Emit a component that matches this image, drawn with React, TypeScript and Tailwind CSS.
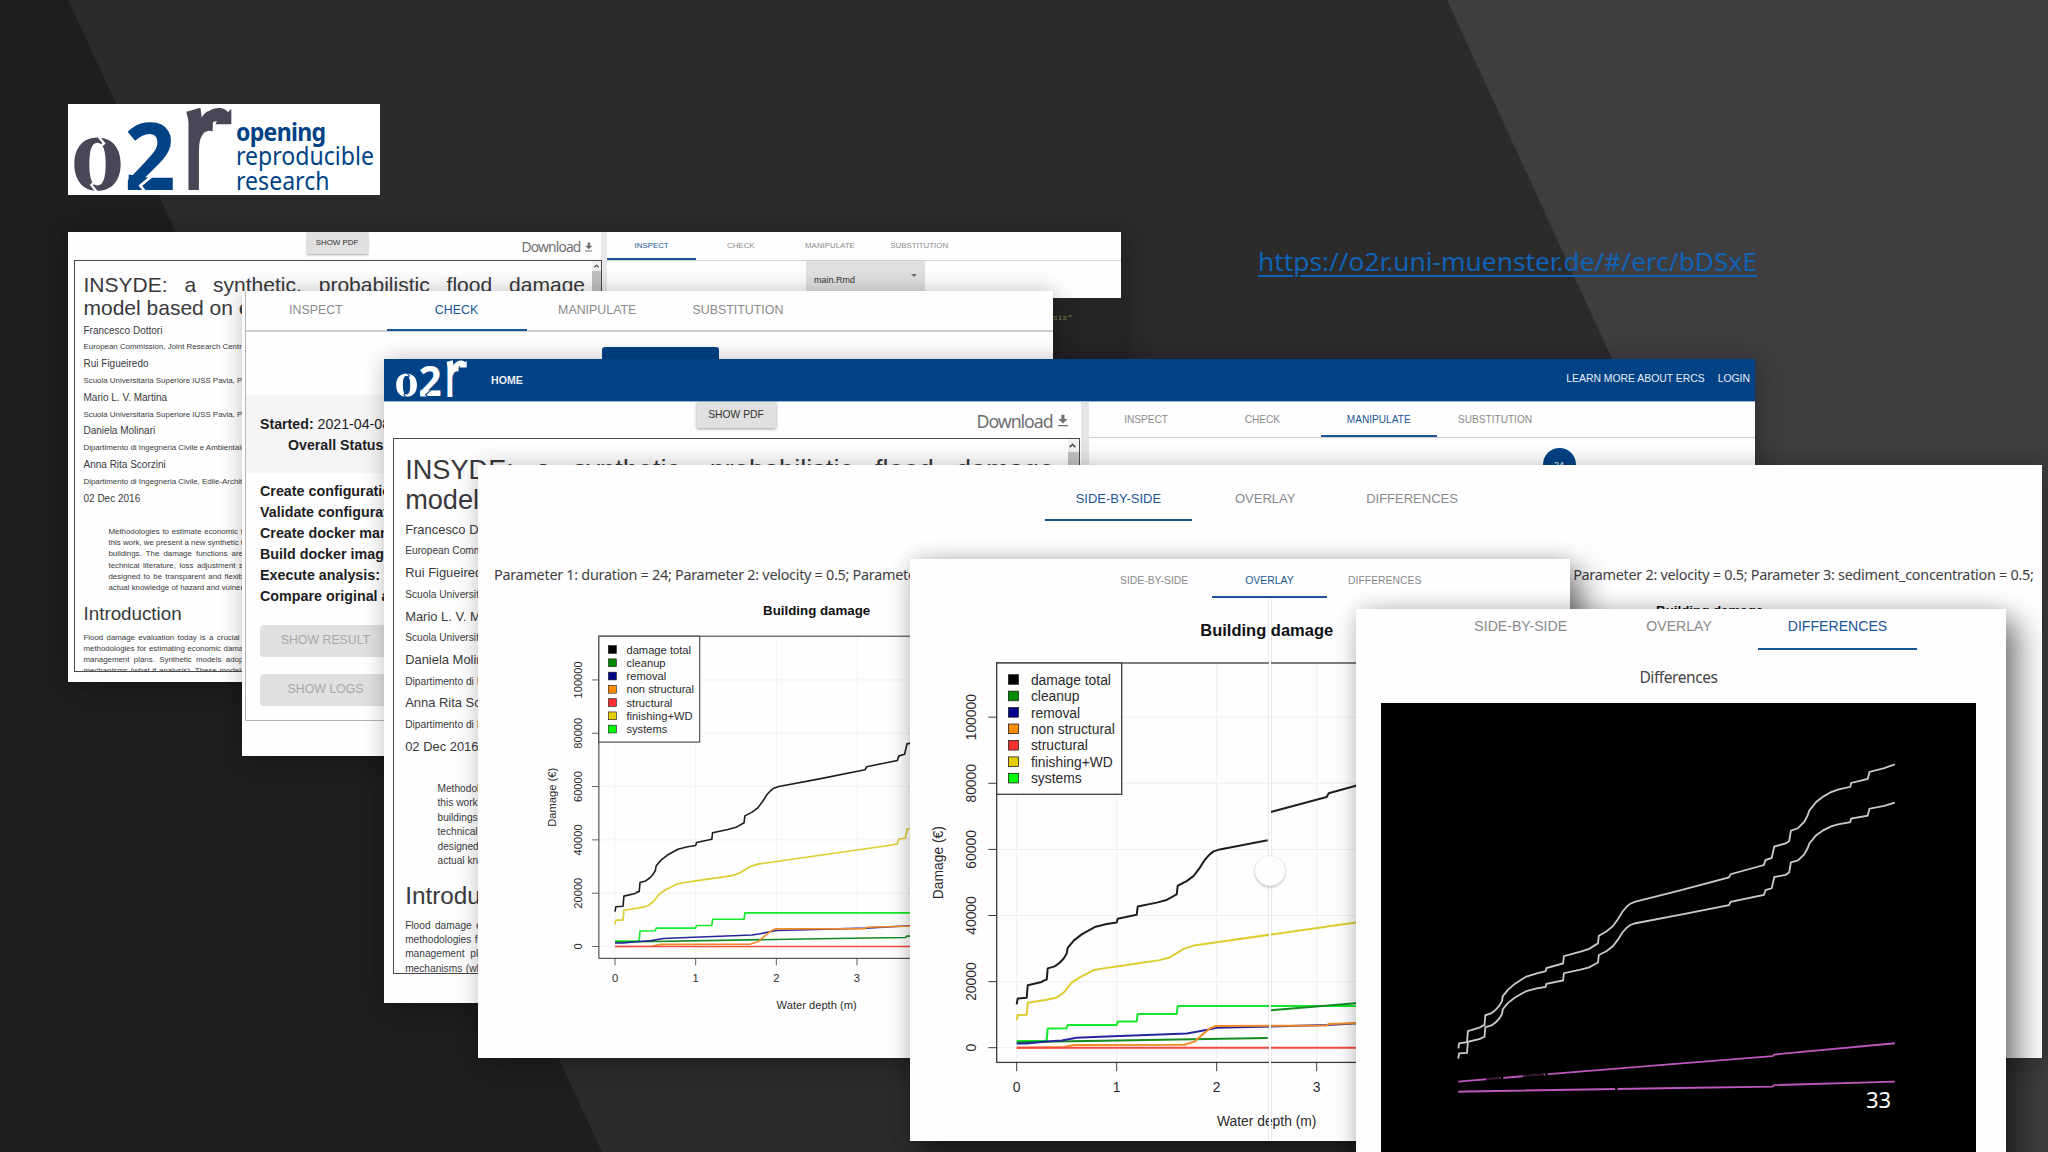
import { clsx } from "clsx";
import type { ReactNode } from "react";

type Point = [number, number];

// water depth (m) -> damage (thousand euro)
const total: Point[] = [
  [0, 13.1], [0.01, 14.9], [0.1, 15.1], [0.11, 18.9], [0.25, 19.9], [0.27, 20.3], [0.3, 20.6], [0.31, 24],
  [0.38, 24.6], [0.43, 25.7], [0.47, 27], [0.5, 28.5], [0.51, 30.2], [0.57, 32.4], [0.65, 34.3], [0.78, 36.5],
  [0.9, 37.4], [1, 37.9], [1.01, 39], [1.2, 40.2], [1.21, 42.7], [1.4, 43.9], [1.5, 44.7], [1.6, 46.4],
  [1.61, 49], [1.7, 50.4], [1.77, 52], [1.83, 54.4], [1.88, 56.8], [1.93, 58.5], [1.97, 59.4], [2.03, 60],
  [2.52, 62.8], [3.1, 66.3], [3.12, 67.4], [3.5, 69.8], [3.52, 71.5], [3.59, 72.1], [3.62, 76], [3.75, 76.8],
  [3.79, 77.6], [3.81, 81.1], [3.89, 81.8], [3.96, 83.8], [4, 85.9], [4.02, 87.6], [4.1, 90.5], [4.18, 92.2],
  [4.27, 93.6], [4.35, 94.3], [4.49, 95], [4.5, 96.3], [4.69, 97.3], [4.71, 99.7], [4.88, 100.7], [5, 101.8],
];

const finishing: Point[] = [
  [0, 8.3], [0.01, 9.9], [0.1, 10], [0.11, 13.6], [0.3, 14.5], [0.4, 15.2], [0.47, 16.7], [0.55, 19.7],
  [0.63, 21.3], [0.77, 23.5], [0.87, 24], [1, 24.6], [1.43, 26.5], [1.53, 27.3], [1.67, 29.9], [1.77, 30.9],
  [2, 31.9], [3.39, 37.9], [3.5, 38.5], [3.52, 40.3], [3.6, 40.6], [3.62, 44], [3.8, 45],
];

const systems: Point[] = [
  [0, 2], [0.27, 2], [0.3, 2.3], [0.31, 5.8], [0.5, 5.9], [0.51, 6.9], [1, 6.9], [1.01, 7.9], [1.2, 7.9],
  [1.21, 10.2], [1.6, 10.2], [1.61, 12.6], [5, 12.6],
];

const removal: Point[] = [
  [0, 1.3], [0.1, 1.3], [0.3, 1.9], [0.45, 2.2], [0.6, 3], [0.9, 3.4], [1.7, 4.3], [1.8, 4.8], [2, 6],
  [3.1, 6.9], [3.6, 7.7], [5, 8.5],
];

const nonStructural: Point[] = [
  [0, 0], [0.45, 0.1], [0.57, 0.8], [1.68, 0.9], [1.78, 1.9], [1.85, 3.8], [1.93, 5.8], [1.99, 6.6], [3.1, 6.7],
  [3.12, 7.2], [3.6, 7.6], [5, 7.8],
];

const cleanup: Point[] = [[0, 1.6], [0.1, 1.7], [2.52, 2.9], [3.6, 3.4], [3.62, 3.9], [5, 5.1]];

const raise = (points: Point[]): Point[] => points.map(([x, y]) => [x, y + 3.5 + 1.96 * x]);
const from = (points: Point[], start: Point): Point[] => [start, ...points.filter(([x]) => x > start[0])];
const until = (points: Point[], end: Point): Point[] => [...points.filter(([x]) => x < end[0]), end];

const toPolyline = (points: Point[]) => points.map(([x, y]) => `${x * 100},${-y * 3.305}`).join(" ");

const legend = [
  { label: "damage total", color: "#000000" },
  { label: "cleanup", color: "#008b00" },
  { label: "removal", color: "#00008b" },
  { label: "non structural", color: "#ff8c00" },
  { label: "structural", color: "#ff3030" },
  { label: "finishing+WD", color: "#e6cd00" },
  { label: "systems", color: "#00ff00" },
];

const authors = [
  ["Francesco Dottori", "European Commission, Joint Research Centre"],
  ["Rui Figueiredo", "Scuola Universitaria Superiore IUSS Pavia, Pavia"],
  ["Mario L. V. Martina", "Scuola Universitaria Superiore IUSS Pavia, Pavia"],
  ["Daniela Molinari", "Dipartimento di Ingegneria Civile e Ambientale"],
  ["Anna Rita Scorzini", "Dipartimento di Ingegneria Civile, Edile-Architettura"],
];

const steps = [
  "Create configuration file:",
  "Validate configuration file:",
  "Create docker manifest:",
  "Build docker image:",
  "Execute analysis:",
  "Compare original and",
];

function Window({ className, deep, children }: { className: string; deep?: boolean; children: ReactNode }) {
  return (
    <section
      className={clsx(
        "absolute overflow-hidden bg-[#fefefe]",
        deep
          ? "shadow-[0_0_20px_rgba(0,0,0,0.18),14px_14px_28px_rgba(0,0,0,0.45)]"
          : "shadow-[0_0_22px_rgba(0,0,0,0.2),8px_8px_24px_rgba(0,0,0,0.1)]",
        className
      )}
    >
      {children}
    </section>
  );
}

function Tabs({
  items,
  active,
  className,
  tabClassName,
}: {
  items: string[];
  active: string;
  className?: string;
  tabClassName: string;
}) {
  return (
    <nav className={clsx("flex", className)}>
      {items.map((item) => (
        <span
          key={item}
          className={clsx(
            "flex shrink-0 items-center justify-center border-b-2",
            tabClassName,
            item === active ? "border-[#1c5595] text-[#1c5595]" : "border-transparent text-[#8a8a8c]"
          )}
        >
          {item}
        </span>
      ))}
    </nav>
  );
}

const ercTabs = ["INSPECT", "CHECK", "MANIPULATE", "SUBSTITUTION"];
const compareTabs = ["SIDE-BY-SIDE", "OVERLAY", "DIFFERENCES"];

function LogoMark({ className, round, two, gap }: { className: string; round: string; two: string; gap: string }) {
  return (
    <svg viewBox="18 8 474 254" className={className} preserveAspectRatio="none">
      {/* ring with two arrow cuts */}
      <path
        fill={round}
        fillRule="evenodd"
        d="M88 100 C134 100 158 134 158 180 C158 227 134 261 88 261 C43 261 19 227 19 180 C19 134 43 100 88 100 Z M88 116 C70 116 64 143 64 180 C64 218 70 245 88 245 C107 245 113 218 113 180 C113 143 107 116 88 116 Z"
      />
      <path d="M92 98 L108 118 L84 138" fill="none" stroke={gap} strokeWidth="7" />
      <path d="M86 264 L70 244 L92 222" fill="none" stroke={gap} strokeWidth="7" />
      <text transform="translate(169 258) scale(0.95 1)" fontFamily="Open Sans" fontWeight="700" fontSize="284" fill={two}>
        2
      </text>
      <path d="M182 212 L182 259 L226 259 L212 248 L240 222 Z" fill={two} />
      <path d="M250 218 L217 246 L230 262" fill="none" stroke={gap} strokeWidth="8" />
      <text transform="translate(345 260) scale(0.49 1)" fontFamily="Open Sans" fontWeight="700" fontSize="430" fill={round}>
        r
      </text>
      <path
        d="M355 22 L397 10 L402 45 C415 22 432 11 452 11 C465 11 477 17 480 24 L490 13 V60 H442 L447 50 C430 52 412 68 402 92 L364 60 Z"
        fill={round}
      />
    </svg>
  );
}

function Download({ className }: { className: string }) {
  return (
    <span className={clsx("flex items-center text-[#6f6f72]", className)}>
      <span className="font-['Noto_Sans'] tracking-[-0.06em]">Download</span>
      <svg viewBox="0 0 14 17" className="ml-[0.3em] h-[0.76em] w-[0.56em]" fill="currentColor">
        <path d="M4.8 0 H9.2 V6 H13.5 L7 12.3 L0.5 6 H4.8 Z M0 14.3 H14 V16.4 H0 Z" />
      </svg>
    </span>
  );
}

// everything in em, so the same paper works at both window scales
function Paper({ className }: { className: string }) {
  return (
    <div
      className={clsx(
        "relative overflow-hidden border border-[#4a4a4e] pt-[1.2em] pl-[0.9em] whitespace-nowrap text-[#39393c]",
        className
      )}
    >
      <div className="w-[50.15em]">
        <h1 className="text-[2.1em] leading-[1.115]">
          <div className="[text-align-last:justify]">INSYDE: a synthetic, probabilistic flood damage</div>
          <div>model based on explicit cost analysis</div>
        </h1>
        <div className="mt-[0.27em]">
          {authors.map(([name, place]) => (
            <div key={name}>
              <p className="leading-[1.68]">{name}</p>
              <p className="text-[0.79em] leading-[2.127]">{place}</p>
            </div>
          ))}
          <p className="leading-[1.68]">02 Dec 2016</p>
        </div>
        <div className="mt-[1.88em] pl-[2.5em]">
          <div className="text-[0.787em] leading-[1.417]">
            <p className="[word-spacing:0.08em]">Methodologies to estimate economic flood damages are</p>
            <p>this work, we present a new synthetic flood damage model</p>
            <p className="[word-spacing:0.25em]">buildings. The damage functions are designed using</p>
            <p className="[word-spacing:0.18em]">technical literature, loss adjustment studies, and damage</p>
            <p className="[word-spacing:0.13em]">designed to be transparent and flexible, and therefore</p>
            <p>actual knowledge of hazard and vulnerability variables.</p>
          </div>
        </div>
        <h2 className="mt-[0.18em] text-[1.88em] leading-[1.88]">Introduction</h2>
        <div className="text-[0.787em] leading-[1.417]">
          <p className="[word-spacing:0.15em]">Flood damage evaluation today is a crucial component</p>
          <p className="[word-spacing:0.05em]">methodologies for estimating economic damages are</p>
          <p className="[word-spacing:0.29em]">management plans. Synthetic models adopt an</p>
          <p className="[word-spacing:0.08em]">mechanisms (what-if analysis). These models</p>
        </div>
      </div>
      <div className="absolute top-0 right-0 flex h-full w-[0.85em] flex-col items-center bg-[#f1f1f1]">
        <svg viewBox="0 0 8 8" className="h-[1em] w-[0.7em]" fill="none" stroke="#505050" strokeWidth="1.4">
          <path d="M1.5 5.5 L4 3 L6.5 5.5" />
        </svg>
        <div className="w-full flex-1 bg-[#c1c1c1]" />
      </div>
    </div>
  );
}

function Series({ points, color }: { points: Point[]; color: string }) {
  return <polyline points={toPolyline(points)} fill="none" stroke={color} strokeWidth="2" strokeLinejoin="round" />;
}

function DamageChart({ viewBox, className, split }: { viewBox: string; className: string; split?: boolean }) {
  const gray = "#3c3c3e";
  return (
    <svg viewBox={viewBox} className={className} fontFamily="Liberation Sans" fontSize="13.85" fill="#2a2a2c">
      {[0, 1, 2, 3, 4, 5].map((x) => (
        <line key={x} x1={x * 100} x2={x * 100} y1="-384" y2="14" stroke="#efeff1" />
      ))}
      {[0, 1, 2, 3, 4, 5].map((y) => (
        <line key={y} x1="-20" x2="520" y1={y * -66.1} y2={y * -66.1} stroke="#efeff1" />
      ))}
      <Series points={systems} color="#14e82c" />
      <Series points={finishing} color="#decb2e" />
      {split ? (
        <>
          <Series points={until(total, [2.51, 62.8])} color="#1e1e22" />
          <Series points={from(raise(total), [2.54, 71.3])} color="#1e1e22" />
          <Series points={until(cleanup, [2.51, 2.9])} color="#148c20" />
          <Series points={from(raise(cleanup), [2.54, 11.3])} color="#148c20" />
        </>
      ) : (
        <>
          <Series points={total} color="#1e1e22" />
          <Series points={cleanup} color="#148c20" />
        </>
      )}
      <Series points={removal} color="#26269c" />
      <Series points={nonStructural} color="#f08c28" />
      <Series points={[[0, 0], [5, 0]]} color="#f24a40" />

      <rect x="-20" y="-384.7" width="540" height="399.4" fill="none" stroke={gray} strokeWidth="1.3" />
      {[0, 1, 2, 3, 4, 5].map((x) => (
        <g key={x}>
          <line x1={x * 100} x2={x * 100} y1="14.7" y2="23.5" stroke={gray} />
          <text x={x * 100} y="44.5" textAnchor="middle">
            {x}
          </text>
        </g>
      ))}
      {[0, 20000, 40000, 60000, 80000, 100000].map((y) => (
        <g key={y}>
          <line x1="-28.4" x2="-20" y1={y * -0.003305} y2={y * -0.003305} stroke={gray} />
          <text transform={`translate(-40.5 ${y * -0.003305}) rotate(-90)`} textAnchor="middle">
            {y}
          </text>
        </g>
      ))}
      <text transform="translate(-73.7 -185) rotate(-90)" textAnchor="middle">
        Damage (€)
      </text>
      <text x="250" y="78" textAnchor="middle">
        Water depth (m)
      </text>
      <text x="250" y="-411.5" textAnchor="middle" fontWeight="700" fontSize="16.5" fill="#101012">
        Building damage
      </text>

      <rect x="-20" y="-384.7" width="125" height="131.3" fill="#fefefe" stroke={gray} strokeWidth="1.3" />
      {legend.map(({ label, color }, i) => (
        <g key={label}>
          <rect x="-8.3" y={-373 + i * 16.44} width="10" height="9.6" fill={color} stroke="#222" strokeWidth="0.8" />
          <text x="14.2" y={-363 + i * 16.44}>
            {label}
          </text>
        </g>
      ))}
    </svg>
  );
}

function DifferenceChart() {
  const lines = [
    { points: total, color: "#c9c9c9" },
    { points: raise(total), color: "#c9c9c9" },
    { points: cleanup, color: "#bd58bd" },
    { points: raise(cleanup), color: "#bd58bd" },
  ];
  return (
    <svg viewBox="-88.4 -450.6 681.3 514.9" className="h-[449.5px] w-[595px] bg-black">
      {lines.map(({ points, color }, i) => (
        <polyline key={i} points={toPolyline(points)} fill="none" stroke={color} strokeWidth="2.1" />
      ))}
      <g stroke="#000" strokeWidth="3">
        <path d="M181 -14 V0 M381 -48 V-30 M101 -32 V-18 M50 -30 V-14" />
        <path d="M32 -19 L48 -20.5 M74 -22.5 L98 -24.5" strokeOpacity="0.75" />
      </g>
    </svg>
  );
}

const parameterText =
  "Parameter 1: duration = 24; Parameter 2: velocity = 0.5; Parameter 3: sediment_concentration = 0.5;";

export default function App() {
  return (
    <main className="relative h-[1152px] w-[2048px] overflow-hidden bg-[#2b2b2c] font-['Liberation_Sans',sans-serif]">
      <svg viewBox="0 0 2048 1152" className="absolute inset-0 h-full w-full">
        <path d="M0 0 H68 L602 1152 H0 Z" fill="#1e1e1f" />
        <path d="M1447 0 H2048 V1152 H1977 Z" fill="#3e3e40" />
      </svg>

      {/* Project logo */}
      <div className="absolute top-[104px] left-[68px] flex h-[91px] w-[312px] bg-white text-[#004286]">
        <LogoMark className="mt-[3px] ml-[6px] h-[84px] w-[158px] shrink-0" round="#474757" two="#004286" gap="#ffffff" />
        <div className="ml-[3.5px] origin-left scale-x-[0.905] pt-[14.5px] font-['Noto_Sans'] text-[25.5px] leading-[24.6px]">
          <div className="font-bold tracking-[-0.03em]">opening</div>
          <div>reproducible</div>
          <div>research</div>
        </div>
      </div>

      <a className="absolute top-[242px] left-[1258px] font-['Noto_Sans'] text-[26.3px] leading-[38px] whitespace-nowrap text-[#1062b4] underline decoration-2 underline-offset-4">
        https://o2r.uni-muenster.de/#/erc/bDSxE
      </a>

      {/* Inspect */}
      <Window className="top-[232px] left-[68px] flex h-[450px] w-[1053px]">
        <div className="w-[533px] shrink-0 pl-[5.5px]">
          <div className="flex h-[28px]">
            <div className="ml-[233px] h-[22px] w-[61px] bg-[#e0e0e0] pt-[5px] text-center text-[7.9px] leading-[11px] text-[#303030] shadow-[0_1px_2px_rgba(0,0,0,0.35)]">
              SHOW PDF
            </div>
            <Download className="ml-[154px] pt-[3px] text-[13.8px]" />
          </div>
          <Paper className="h-[412px] w-[528px] text-[10px]" />
        </div>
        <div className="w-[6px] shrink-0 bg-[#e8e8ea]" />
        <div className="flex-1">
          <Tabs
            items={ercTabs}
            active="INSPECT"
            className="border-b border-[#cfcfd2] text-[7.9px]"
            tabClassName="w-[89.2px] h-[27.5px] pt-[2px]"
          />
          <div className="h-[37px]">
            <div className="ml-[199px] flex h-[31px] w-[119px] items-center justify-between bg-[#e0e0e0] px-[8px] pt-[9px] text-[9px] text-[#303033]">
              main.Rmd
              <span className="mb-[10px] border-x-[3px] border-t-[3px] border-x-transparent border-t-[#6f6f72]" />
            </div>
          </div>
          <div className="h-full bg-[#252526] pt-[14px] pl-[422px] font-['Liberation_Mono'] text-[8px] leading-[12px] text-[#7d8a4e]">
            analysis"
          </div>
        </div>
      </Window>

      {/* Check */}
      <Window className="top-[291px] left-[242px] h-[465px] w-[811px] pl-[3px]">
        <div className="h-[430px] border-b border-l border-[#b5b5b8]">
          <Tabs
            items={ercTabs}
            active="CHECK"
            className="border-b-2 border-[#d0d0d3] text-[12.4px]"
            tabClassName="-mb-px w-[140.7px] h-[40px] pr-px"
          />
          <div className="flex h-[63px] items-start">
            <div className="mt-[15px] ml-[356px] h-[40px] w-[117px] rounded-[3px] bg-[#004286]" />
          </div>
          <div className="h-[78px] bg-[#f5f5f6] pt-[19px] pl-[14px] text-[14.2px] leading-[21px] whitespace-nowrap text-[#1d1d1f]">
            <p>
              <b>Started:</b> 2021-04-08
            </p>
            <p className="pl-[28px] font-bold">Overall Status:</p>
          </div>
          <div className="pt-[7.5px] pl-[14px] text-[14.3px] leading-[21.1px] font-bold text-[#1d1d1f]">
            {steps.map((step) => (
              <p key={step}>{step}</p>
            ))}
          </div>
          <div className="mt-[17.5px] ml-[14px] flex w-[131px] flex-col gap-[17px] text-[12.3px] text-[#a9a9ab]">
            {["SHOW RESULT", "SHOW LOGS"].map((label) => (
              <div key={label} className="flex h-[32px] items-center justify-center rounded-[4px] bg-[#e0e0e0]">
                {label}
              </div>
            ))}
          </div>
        </div>
      </Window>

      {/* Manipulate */}
      <Window className="top-[359px] left-[383.5px] h-[644px] w-[1371.5px]">
        <header className="flex h-[43px] items-center border-b border-[#9db3cf] bg-[#004286] text-[10.4px] text-[#eaf0f6]">
          <LogoMark className="mt-[-3px] ml-[12px] h-[37px] w-[71px]" round="#ffffff" two="#ffffff" gap="#004286" />
          <b className="mt-px ml-[24.5px] text-[10.6px]">HOME</b>
          <span className="-mt-[3px] ml-auto">LEARN MORE ABOUT ERCS</span>
          <span className="-mt-[3px] mr-[5px] ml-[13px]">LOGIN</span>
        </header>
        <div className="flex h-full">
          <div className="w-[697px] shrink-0 pl-[9px]">
            <div className="flex h-[36px]">
              <div className="ml-[304px] h-[26px] w-[79px] bg-[#e0e0e0] pt-[6px] text-center text-[10.3px] leading-[14px] text-[#303030] shadow-[0_1px_3px_rgba(0,0,0,0.4)]">
                SHOW PDF
              </div>
              <Download className="ml-[201px] pt-[2px] text-[17.8px]" />
            </div>
            <Paper className="h-[536px] w-[687px] text-[12.94px]" />
          </div>
          <div className="w-[8px] shrink-0 bg-[#e4e4e6]" />
          <div className="flex-1">
            <Tabs
              items={ercTabs}
              active="MANIPULATE"
              className="border-b border-[#cfcfd2] text-[10.1px]"
              tabClassName="w-[116.3px] h-[35px] pt-[3px] pr-px"
            />
            <div className="mt-[10px] ml-[454px] flex h-[33px] w-[33px] items-center justify-center rounded-full bg-[#004286] pt-[3px] text-[9px] text-white">
              24
            </div>
          </div>
        </div>
      </Window>

      {/* Side by side */}
      <Window className="top-[465px] left-[478px] h-[593px] w-[1563.5px]">
        <Tabs
          items={compareTabs}
          active="SIDE-BY-SIDE"
          className="ml-[567px] pt-[12px] text-[13px]"
          tabClassName="w-[146.8px] h-[44px] pt-[2px]"
        />
        <div className="mt-[42px] flex font-['Noto_Sans'] text-[14.43px] leading-[24px] tracking-[-0.02em] whitespace-nowrap text-[#404043]">
          <div className="w-[893px] shrink-0 pl-[16px]">{parameterText}</div>
          <div className="flex flex-1 justify-end pr-[8px]">{parameterText}</div>
        </div>
        <div className="flex">
          <DamageChart viewBox="-169.8 -445.7 1107 582.7" className="h-[470px] w-[893px] shrink-0" />
          <DamageChart viewBox="-169.8 -445.7 1107 582.7" className="h-[470px] w-[893px] shrink-0" />
        </div>
      </Window>

      {/* Overlay */}
      <Window deep className="top-[559px] left-[909.5px] h-[582px] w-[660px]">
        <Tabs
          items={compareTabs}
          active="OVERLAY"
          className="ml-[187px] pt-[4px] text-[10.4px]"
          tabClassName="w-[115.3px] h-[35px] pt-[3px]"
        />
        <DamageChart viewBox="-106.7 -449.7 660 543" className="h-[543px] w-[660px]" split />
        <div className="absolute top-[41px] bottom-0 left-[359px] w-[2px] bg-white shadow-[0_0_2px_rgba(0,0,0,0.3)]" />
        <div className="absolute top-[297px] left-[345px] size-[30px] rounded-full bg-[#fefefe] shadow-[0_1px_3px_rgba(0,0,0,0.3)]" />
      </Window>

      {/* Differences */}
      <Window deep className="top-[608.5px] left-[1356px] h-[560px] w-[650px]">
        <Tabs
          items={compareTabs}
          active="DIFFERENCES"
          className="ml-[85.5px] text-[14.1px]"
          tabClassName="w-[158.4px] h-[41px] pb-[2px]"
        />
        <p className="mt-[15px] text-center font-['Noto_Sans'] text-[15.6px] leading-[24px] tracking-[-0.03em] text-[#454548]">
          <span className="mr-[5px]">Differences</span>
        </p>
        <div className="mt-[14px] ml-[25px]">
          <DifferenceChart />
        </div>
      </Window>

      <span className="absolute top-[1084px] left-[1866px] font-['Noto_Sans'] text-[22px] leading-[30px] text-white">33</span>
    </main>
  );
}
